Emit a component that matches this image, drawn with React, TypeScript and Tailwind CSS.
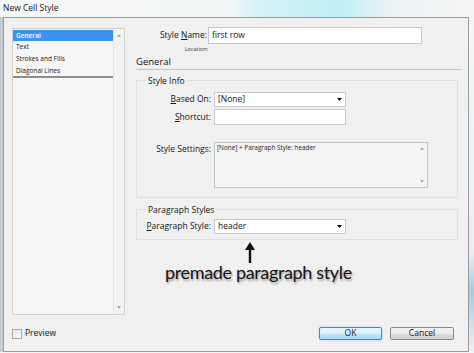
import React from "react";

const Tri = ({ down = true, color = "#000", w = 5, h = 3 }: { down?: boolean; color?: string; w?: number; h?: number }) => (
  <svg width={w} height={h} viewBox="0 0 5 3" className="block">
    <path d={down ? "M0 0H5L2.5 3Z" : "M0 3H5L2.5 0Z"} fill={color} />
  </svg>
);

const Combo = ({ value, h = 15 }: { value: string; h?: number }) => (
  <div
    className="w-[132px] bg-white border border-[#c5c8cc] flex items-center pl-[3px] pr-[3px] text-[8.5px]"
    style={{ height: h }}
  >
    <span className="flex-1">{value}</span>
    <Tri />
  </div>
);

export default function App() {
  return (
    <div className="w-[474px] h-[353px] overflow-hidden bg-[#f3f5f6] font-['Open_Sans',sans-serif] text-[#161616] flex flex-col">
      <div className="h-[17px] shrink-0 pl-[3px] flex items-center text-[8.5px] bg-[linear-gradient(90deg,#f6f7f8_0%,#f3f6f7_48%,#d4f2f7_55%,#c2eef6_72%,#ebf1f3_82%,#f5f5f5_100%)]">
        New Cell Style
      </div>
      <div className="flex">
        <div className="w-[3px] h-[335px] bg-[#c5ccd1]" />
        <div className="w-[466px] h-[335px] border border-[#9b9b9b] bg-[#f0f0f0] flex flex-col">
          <div className="flex h-[297px]">
            {/* Left list */}
            <div className="pl-[8px] pt-[10px]">
              <div className="w-[113px] h-[287px] border border-[#cfcfcf] bg-[#f6f6f6] flex">
                <div className="flex-1 pt-[1px] text-[6.5px]">
                  <div className="h-[11px] bg-[#3a93ee] text-white font-semibold flex items-center pl-[3px]">General</div>
                  <div className="h-[12px] flex items-center pl-[3px]">Text</div>
                  <div className="h-[12px] flex items-center pl-[3px]">Strokes and Fills</div>
                  <div className="h-[11px] flex items-center pl-[3px]">Diagonal Lines</div>
                  <div className="h-[2px] bg-[#8c8c8c]" />
                </div>
                <div className="w-[11px] border-l border-[#e2e2e2] bg-[#f3f3f3] flex flex-col items-center justify-between pt-[5px] pb-[5px]">
                  <Tri down={false} color="#9a9a9a" w={4} h={3} />
                  <Tri color="#9a9a9a" w={4} h={3} />
                </div>
              </div>
            </div>
            {/* Right column */}
            <div className="ml-[11px] w-[325px] flex flex-col">
              <div className="mt-[9px] h-[17px] flex items-center">
                <div className="w-[72px] text-right text-[8.5px] pr-[1px]">
                  Style <u className="underline-offset-1">N</u>ame:
                </div>
                <div className="w-[214px] h-[17px] bg-white border border-[#c5c8cc] flex items-center pl-[3px] text-[8.5px]">
                  first row
                </div>
              </div>
              <div className="mt-[1px] h-[8px] w-[72px] text-right text-[5.5px] leading-[8px] text-[#333]">Location:</div>
              <div className="mt-[2px] h-[15px] border-b border-[#c2c2c2] text-[9.5px] leading-[13px]">General</div>

              <fieldset className="mt-[5px] w-[322px] border border-[#d9dfe3] pb-[9px]">
                <legend className="ml-[9px] px-[2px] text-[8.5px] leading-[11px]">Style Info</legend>
                <div className="mt-[6px] h-[15px] flex items-center">
                  <div className="w-[74px] text-right text-[8.5px]">
                    <u className="underline-offset-1">B</u>ased On:
                  </div>
                  <div className="ml-[3px]">
                    <Combo value="[None]" />
                  </div>
                </div>
                <div className="mt-[2px] h-[16px] flex items-center">
                  <div className="w-[74px] text-right text-[8.5px]">
                    <u className="underline-offset-1">S</u>hortcut:
                  </div>
                  <div className="ml-[3px] w-[132px] h-[16px] bg-white border border-[#c5c8cc]" />
                </div>
                <div className="mt-[17px] h-[46px] flex items-start">
                  <div className="w-[74px] text-right text-[8.5px] whitespace-nowrap pt-[1px]">Style Settings:</div>
                  <div className="ml-[3px] w-[214px] h-[46px] bg-[#f4f4f4] border border-[#c4c4c4] flex">
                    <div className="flex-1 pl-[2px] pt-[1px] text-[6.4px] leading-[8px] text-[#222]">
                      [None] + Paragraph Style: header
                    </div>
                    <div className="w-[10px] flex flex-col items-center justify-between pt-[4px] pb-[4px]">
                      <Tri down={false} color="#a0a0a0" w={4} h={3} />
                      <Tri color="#a0a0a0" w={4} h={3} />
                    </div>
                  </div>
                </div>
              </fieldset>

              <fieldset className="mt-[6px] w-[322px] border border-[#d9dfe3] pb-[5px]">
                <legend className="ml-[9px] px-[2px] text-[8.5px] leading-[11px]">Paragraph Styles</legend>
                <div className="mt-[4px] h-[15px] flex items-center">
                  <div className="w-[74px] text-right text-[8.5px] whitespace-nowrap">
                    <u className="underline-offset-1">P</u>aragraph Style:
                  </div>
                  <div className="ml-[3px]">
                    <Combo value="header" />
                  </div>
                </div>
              </fieldset>

              <div className="mt-[2px] ml-[109px]">
                <svg width="10" height="21" viewBox="0 0 10 21" className="block">
                  <path d="M5 0L10 8H6.2V21H3.8V8H0Z" fill="#111" />
                </svg>
              </div>
              <div className="ml-[29px] -mt-[2px] font-['Lato',sans-serif] text-[18px] tracking-[-0.35px] leading-[22px] text-[#141414] [text-shadow:1px_2px_2px_rgba(0,0,0,0.35)] whitespace-nowrap">
                premade paragraph style
              </div>
            </div>
          </div>
          {/* Bottom row */}
          <div className="mt-[12px] h-[13px] flex items-center">
            <div className="ml-[8px] w-[10px] h-[10px] border border-[#a9a9a9] bg-[linear-gradient(135deg,#e4e4e4,#fbfbfb)]" />
            <div className="ml-[3px] text-[8.5px]">Preview</div>
            <div className="ml-auto mr-[14px] flex gap-[8px]">
              <div className="w-[63px] h-[13px] border border-[#3c8fc6] rounded-[2px] bg-[linear-gradient(180deg,#eaf6fd_0%,#d9f0fc_50%,#bee6fd_51%,#a7d9f5_100%)] shadow-[0_0_2px_#7ac3ee] flex items-center justify-center text-[8.5px]">
                OK
              </div>
              <div className="w-[64px] h-[13px] border border-[#8a8a8a] rounded-[2px] bg-[linear-gradient(180deg,#f2f2f2_0%,#ebebeb_50%,#dddddd_51%,#cfcfcf_100%)] flex items-center justify-center text-[8.5px]">
                Cancel
              </div>
            </div>
          </div>
        </div>
        <div className="flex-1 h-[335px] bg-[linear-gradient(180deg,#f4f6f7_0%,#e9eff2_70%,#a9c9dd_82%,#eef2f4_100%)]" />
      </div>
    </div>
  );
}
